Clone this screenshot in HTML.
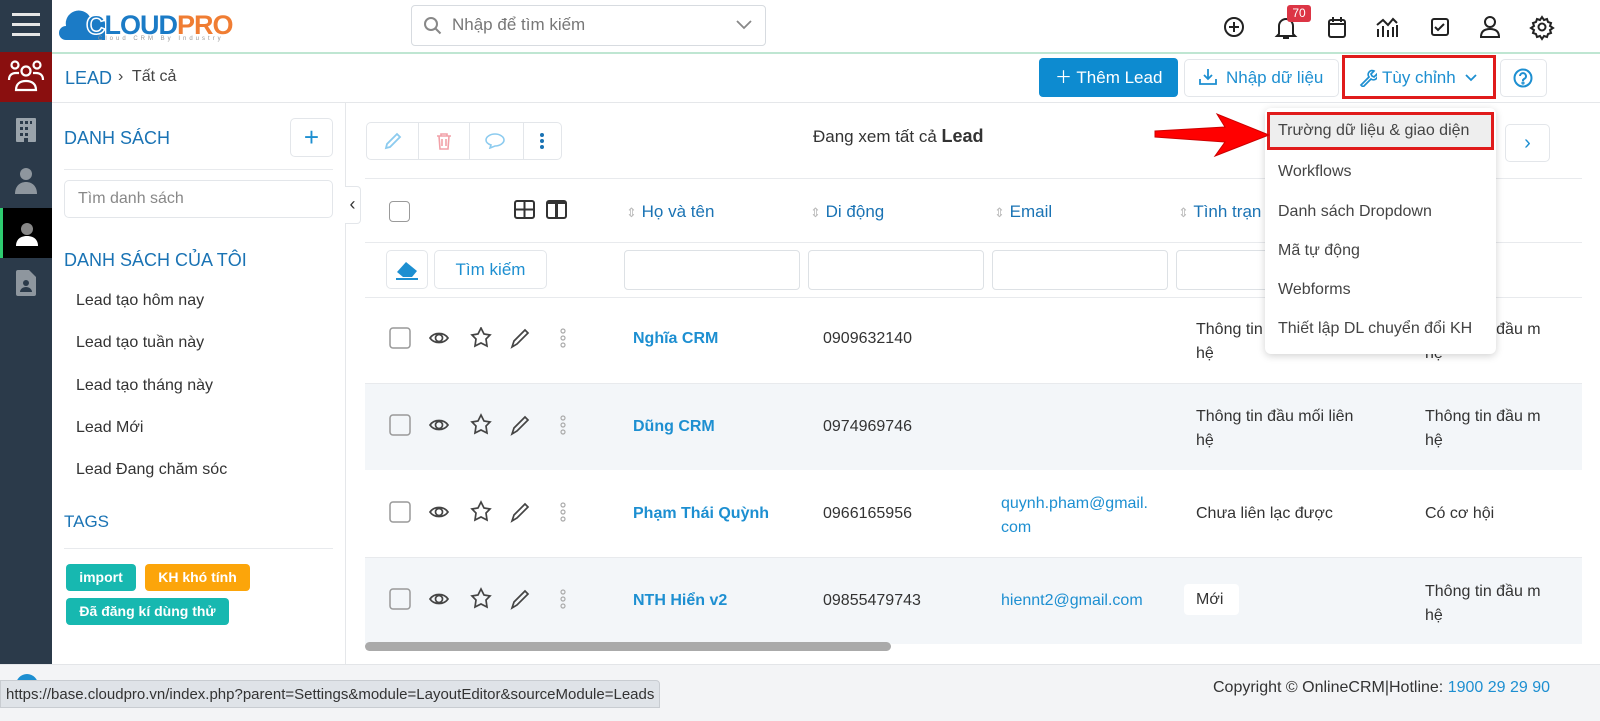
<!DOCTYPE html>
<html><head><meta charset="utf-8">
<style>
*{box-sizing:border-box;margin:0;padding:0}
body{width:1600px;height:721px;overflow:hidden;background:#fff;font-family:"Liberation Sans","Noto Sans CJK SC",sans-serif;font-size:16px;color:#333;position:relative}
.abs{position:absolute}
.blue{color:#1a73b4}
.lnk{color:#1d8fd1}
svg{display:block}
.btn{position:absolute;border:1px solid #e3e6ea;border-radius:5px;background:#fff}
.cb{position:absolute;width:21px;height:21px;border:1.5px solid #9a9a9a;border-radius:4px;background:#fff}
.inp{position:absolute;top:250px;height:40px;border:1px solid #dde1e5;border-radius:4px;background:#fff}
.row{position:absolute;left:365px;width:1217px}
.t{position:absolute;font-size:16px}
</style></head><body>
<!-- sidebar -->
<div class="abs" style="left:0;top:0;width:52px;height:721px;background:#2b3a4a"></div>
<div class="abs" style="left:12px;top:13px;width:28px;height:3px;background:#e6e6e6;box-shadow:0 10px 0 #e6e6e6,0 20px 0 #e6e6e6"></div>
<div class="abs" style="left:0;top:52px;width:52px;height:50px;background:#8a0f0f"></div>
<svg class="abs" style="left:7px;top:58px" width="38" height="36" viewBox="0 0 38 36" fill="none" stroke="#fff" stroke-width="2.2"><circle cx="8" cy="7" r="3.5"/><circle cx="30" cy="7" r="3.5"/><circle cx="19" cy="13" r="4.5"/><path d="M2 22c0-5 3-7 7-7h3M36 22c0-5-3-7-7-7h-3M9 32c0-6 4-9 10-9s10 3 10 9z"/></svg>
<svg class="abs" style="left:16px;top:118px" width="20" height="24"><rect x="0" y="0" width="20" height="24" rx="1" fill="#9aa3ab"/><g fill="#2b3a4a"><rect x="4" y="3" width="3" height="3"/><rect x="9" y="3" width="3" height="3"/><rect x="14" y="3" width="2" height="3"/><rect x="4" y="9" width="3" height="3"/><rect x="9" y="9" width="3" height="3"/><rect x="4" y="15" width="3" height="3"/><rect x="9" y="15" width="3" height="3"/><rect x="8" y="20" width="4" height="4"/></g></svg>
<svg class="abs" style="left:14px;top:166px" width="24" height="28"><circle cx="12" cy="8" r="6" fill="#8e969e"/><path d="M1 28c0-8 5-12 11-12s11 4 11 12z" fill="#8e969e"/></svg>
<div class="abs" style="left:0;top:208px;width:52px;height:50px;background:#000"></div>
<div class="abs" style="left:0;top:208px;width:3px;height:50px;background:#2ecc71"></div>
<svg class="abs" style="left:15px;top:221px" width="24" height="26"><circle cx="12" cy="8" r="6" fill="#888"/><path d="M1 25c0-7 5-10 11-10s11 3 11 10z" fill="#fff"/></svg>
<svg class="abs" style="left:16px;top:270px" width="20" height="26"><path d="M0 2a2 2 0 0 1 2-2h11l7 7v17a2 2 0 0 1-2 2H2a2 2 0 0 1-2-2z" fill="#8e969e"/><circle cx="10" cy="13" r="3" fill="#2b3a4a"/><path d="M4 22c0-3 3-5 6-5s6 2 6 5z" fill="#2b3a4a"/></svg>
<!-- top bar -->
<div class="abs" style="left:52px;top:52px;width:1548px;height:2px;background:#bfe6d2"></div>
<svg class="abs" style="left:59px;top:4px" width="50" height="38"><path d="M7 36a7 7 0 0 1 0-14 13 13 0 0 1 24-9 9 9 0 0 1 15 6v17z" fill="#1b7bc6"/></svg>
<div class="abs" style="left:86px;top:10px;font-size:27px;font-weight:bold;letter-spacing:-1px;line-height:30px"><span style="color:#1b7bc6;-webkit-text-stroke:1.5px #fff">C</span><span style="color:#1b7bc6">LOUD</span><span style="color:#f07d33">PRO</span></div>
<div class="abs" style="left:98px;top:36px;font-size:6px;color:#999;letter-spacing:3px">Cloud CRM By Industry</div>
<div class="abs" style="left:411px;top:5px;width:355px;height:41px;border:1px solid #d7dbe0;border-radius:4px"></div>
<svg class="abs" style="left:424px;top:17px" width="18" height="18" fill="none" stroke="#888" stroke-width="2"><circle cx="7" cy="7" r="6"/><path d="M11.5 11.5l5 5"/></svg>
<div class="t" style="left:452px;top:15px;color:#777;font-size:17px">Nhập để tìm kiếm</div>
<svg class="abs" style="left:736px;top:20px" width="16" height="10" fill="none" stroke="#888" stroke-width="1.8"><path d="M1 1l7 7 7-7"/></svg>
<svg class="abs" style="left:1222px;top:15px" width="350" height="26" fill="none" stroke="#222" stroke-width="2">
<circle cx="12" cy="12" r="9"/><path d="M12 7v10M7 12h10"/>
<path d="M57 19V11a7 7 0 0 1 14 0v8l2 2H55zM61 23h6" />
<rect x="107" y="5" width="16" height="17" rx="2"/><path d="M107 9h16M111 2v5M119 2v5"/>
<path d="M156 22v-8M161 22v-11M166 22v-7M171 22v-10M175 22v-12M155 10l6-5 5 5 5-6 4 4"/>
<rect x="210" y="4" width="16" height="16" rx="2"/><path d="M213 12l3 3 6-6"/>
<circle cx="268" cy="7" r="5"/><path d="M259 22c0-6 4-8 9-8s9 2 9 8z"/>
<circle cx="320" cy="12" r="3.5"/><path d="M320 2l2 3 3-1 1 3 3 1-1 3 3 2-3 2 1 3-3 1-1 3-3-1-2 3-2-3-3 1-1-3-3-1 1-3-3-2 3-2-1-3 3-1 1-3 3 1z"/>
</svg>
<div class="abs" style="left:1287px;top:5px;width:24px;height:17px;background:#dc3545;color:#fff;font-size:12px;border-radius:3px;text-align:center;line-height:17px">70</div>
<!-- breadcrumb -->
<div class="abs" style="left:52px;top:102px;width:1548px;height:1px;background:#e5e7ea"></div>
<div class="t blue" style="left:65px;top:68px;font-size:18px">LEAD</div>
<div class="t" style="left:118px;top:68px;font-size:16px;color:#444">›&nbsp; Tất cả</div>
<div class="abs" style="left:1039px;top:58px;width:139px;height:39px;background:#0d8bd0;border-radius:4px;color:#fff;font-size:17px;line-height:39px;padding-left:16px">＋ Thêm Lead</div>
<div class="btn" style="left:1184px;top:59px;width:155px;height:38px"></div>
<svg class="abs" style="left:1199px;top:68px" width="18" height="18" fill="none" stroke="#1d8fd1" stroke-width="1.8"><path d="M9 1v10M5 7l4 4 4-4M1 11v5h16v-5"/></svg>
<div class="t lnk" style="left:1226px;top:68px;font-size:17px">Nhập dữ liệu</div>
<div class="abs" style="left:1342px;top:55px;width:154px;height:44px;border:3px solid #e01b1b"></div>
<svg class="abs" style="left:1359px;top:69px" width="18" height="18" fill="none" stroke="#1d8fd1" stroke-width="1.7"><path d="M2 16l8-8a4 4 0 0 1 5-6l-3 3 1 2 2 1 3-3a4 4 0 0 1-6 5l-8 8z"/></svg>
<div class="t lnk" style="left:1382px;top:68px;font-size:17px">Tùy chỉnh</div>
<svg class="abs" style="left:1465px;top:74px" width="12" height="8" fill="none" stroke="#1d8fd1" stroke-width="1.8"><path d="M1 1l5 5 5-5"/></svg>
<div class="btn" style="left:1500px;top:59px;width:47px;height:38px"></div>
<svg class="abs" style="left:1513px;top:68px" width="20" height="20" fill="none" stroke="#1d8fd1" stroke-width="2"><circle cx="10" cy="10" r="8.5"/><path d="M7 8a3 3 0 1 1 4 3l-1 1v1"/><circle cx="10" cy="15" r=".6"/></svg>
<!-- left panel -->
<div class="abs" style="left:345px;top:103px;width:1px;height:561px;background:#e5e7ea"></div>
<div class="t blue" style="left:64px;top:128px;font-size:18px">DANH SÁCH</div>
<div class="btn" style="left:290px;top:118px;width:43px;height:39px;color:#1d8fd1;font-size:26px;text-align:center;line-height:36px">+</div>
<div class="abs" style="left:64px;top:169px;width:269px;height:1px;background:#e8eaed"></div>
<div class="btn" style="left:64px;top:180px;width:269px;height:38px"></div>
<div class="t" style="left:78px;top:190px;color:#888">Tìm danh sách</div>
<div class="t blue" style="left:64px;top:250px;font-size:18px">DANH SÁCH CỦA TÔI</div>
<div class="t" style="left:76px;top:292px">Lead tạo hôm nay</div>
<div class="t" style="left:76px;top:334px">Lead tạo tuần này</div>
<div class="t" style="left:76px;top:377px">Lead tạo tháng này</div>
<div class="t" style="left:76px;top:419px">Lead Mới</div>
<div class="t" style="left:76px;top:461px">Lead Đang chăm sóc</div>
<div class="t blue" style="left:64px;top:512px;font-size:17px">TAGS</div>
<div class="abs" style="left:64px;top:548px;width:269px;height:1px;background:#e8eaed"></div>
<div class="abs" style="left:66px;top:564px;width:70px;height:27px;background:#17b8b0;border-radius:4px;color:#fff;font-size:14px;font-weight:bold;text-align:center;line-height:27px">import</div>
<div class="abs" style="left:145px;top:564px;width:105px;height:27px;background:#fca50a;border-radius:4px;color:#fff;font-size:14px;font-weight:bold;text-align:center;line-height:27px">KH khó tính</div>
<div class="abs" style="left:66px;top:598px;width:163px;height:27px;background:#17b8b0;border-radius:4px;color:#fff;font-size:14px;font-weight:bold;text-align:center;line-height:27px">Đã đăng kí dùng thử</div>
<div class="btn" style="left:345px;top:186px;width:16px;height:38px;border-left:none;border-radius:0 4px 4px 0;font-size:18px;line-height:34px;text-align:center;color:#333">‹</div>
<!-- toolbar -->
<div class="btn" style="left:366px;top:122px;width:196px;height:38px"></div>
<div class="abs" style="left:418px;top:123px;width:1px;height:36px;background:#e3e6ea"></div>
<div class="abs" style="left:469px;top:123px;width:1px;height:36px;background:#e3e6ea"></div>
<div class="abs" style="left:523px;top:123px;width:1px;height:36px;background:#e3e6ea"></div>
<svg class="abs" style="left:384px;top:132px" width="18" height="18" fill="none" stroke="#8ccbef" stroke-width="1.8"><path d="M2 16l1-4 10-10 3 3-10 10z"/></svg>
<svg class="abs" style="left:436px;top:132px" width="16" height="18" fill="none" stroke="#f2a1a8" stroke-width="1.6"><path d="M1 4h14M5 4V2h6v2M3 4l1 13h8l1-13M6 7v7M10 7v7"/></svg>
<svg class="abs" style="left:485px;top:133px" width="20" height="16" fill="none" stroke="#8ccbef" stroke-width="1.6"><path d="M10 1c5 0 9 3 9 6s-4 6-9 6l-5 2 1-3c-3-1-5-3-5-5 0-3 4-6 9-6z"/></svg>
<div class="abs" style="left:540px;top:133px;width:4px;height:4px;border-radius:2px;background:#1a73b4;box-shadow:0 6px 0 #1a73b4,0 12px 0 #1a73b4"></div>
<div class="t" style="left:813px;top:126px;font-size:17px">Đang xem tất cả <b style="font-size:18px">Lead</b></div>
<div class="btn" style="left:1505px;top:124px;width:45px;height:38px;color:#1d8fd1;text-align:center;line-height:36px;font-size:20px">›</div>
<!-- table -->
<div class="abs" style="left:365px;top:178px;width:1217px;height:1px;background:#e8eaed"></div>
<div class="abs" style="left:365px;top:242px;width:1217px;height:1px;background:#e8eaed"></div>
<div class="abs" style="left:365px;top:297px;width:1217px;height:1px;background:#e8eaed"></div>
<div class="cb" style="left:389px;top:201px"></div>
<svg class="abs" style="left:514px;top:200px" width="54" height="20" fill="none" stroke="#333" stroke-width="2"><rect x="1" y="1" width="19" height="17" rx="2"/><path d="M10.5 1v17M1 9.5h19"/><rect x="33" y="1" width="19" height="17" rx="2"/><path d="M42.5 1v17M33 2.5h19" stroke-width="3"/></svg>
<div class="t blue" style="left:626px;top:202px;font-size:17px"><span style="color:#bbb;font-size:13px">⇕</span> Họ và tên</div>
<div class="t blue" style="left:810px;top:202px;font-size:17px"><span style="color:#bbb;font-size:13px">⇕</span> Di động</div>
<div class="t blue" style="left:994px;top:202px;font-size:17px"><span style="color:#bbb;font-size:13px">⇕</span> Email</div>
<div class="t blue" style="left:1178px;top:202px;font-size:17px"><span style="color:#bbb;font-size:13px">⇕</span> Tình trạn</div>
<div class="btn" style="left:386px;top:250px;width:42px;height:39px"></div>
<svg class="abs" style="left:395px;top:260px" width="24" height="20"><path d="M2 12l9-10 11 9-5 6H8z" fill="#1d8fd1"/><path d="M1 19h22" stroke="#1d8fd1" stroke-width="2"/></svg>
<div class="btn lnk" style="left:434px;top:250px;width:113px;height:39px;text-align:center;line-height:37px;font-size:17px">Tìm kiếm</div>
<div class="inp" style="left:624px;width:176px"></div>
<div class="inp" style="left:808px;width:176px"></div>
<div class="inp" style="left:992px;width:176px"></div>
<div class="inp" style="left:1176px;width:176px"></div>
<div class="row" style="top:383px;height:87px;background:#f3f6f9;border-top:1px solid #e8eaed"></div>
<div class="row" style="top:557px;height:87px;background:#f3f6f9;border-top:1px solid #e8eaed"></div>
<div class="abs" style="left:365px;top:642px;width:526px;height:9px;background:#aaa;border-radius:5px"></div>
<!-- row icons -->
<svg class="abs" style="left:389px;top:327px" width="190" height="290" fill="none" stroke="#444" stroke-width="1.7">
<g id="r"><rect x="1" y="1" width="20" height="20" rx="3" stroke="#999" stroke-width="1.5"/><path d="M41 11c4-6 14-6 18 0-4 6-14 6-18 0z"/><circle cx="50" cy="11" r="3.5"/><path d="M92 1l3 6 6 1-4 4 1 7-6-3-6 3 1-7-4-4 6-1z"/><path d="M123 20l2-6 11-11 3 3-11 11z"/><g stroke="#aaa" stroke-width="1.2"><circle cx="174" cy="4" r="2"/><circle cx="174" cy="11" r="2"/><circle cx="174" cy="18" r="2"/></g></g>
<use href="#r" y="87"/><use href="#r" y="174"/><use href="#r" y="261"/>
</svg>
<!-- row data -->
<div class="t lnk" style="left:633px;top:330px;font-weight:bold;color:#1d8fd1">Nghĩa CRM</div>
<div class="t" style="left:823px;top:330px">0909632140</div>
<div class="t" style="left:1196px;top:318px;line-height:24px">Thông tin đầu mối liên<br>hệ</div>
<div class="t" style="left:1425px;top:318px;line-height:24px">Thông tin đầu m<br>hệ</div>
<div class="t lnk" style="left:633px;top:418px;font-weight:bold">Dũng CRM</div>
<div class="t" style="left:823px;top:418px">0974969746</div>
<div class="t" style="left:1196px;top:405px;line-height:24px">Thông tin đầu mối liên<br>hệ</div>
<div class="t" style="left:1425px;top:405px;line-height:24px">Thông tin đầu m<br>hệ</div>
<div class="t lnk" style="left:633px;top:505px;font-weight:bold">Phạm Thái Quỳnh</div>
<div class="t" style="left:823px;top:505px">0966165956</div>
<div class="t lnk" style="left:1001px;top:492px;line-height:24px">quynh.pham@gmail.<br>com</div>
<div class="t" style="left:1196px;top:505px">Chưa liên lạc được</div>
<div class="t" style="left:1425px;top:505px">Có cơ hội</div>
<div class="t lnk" style="left:633px;top:592px;font-weight:bold">NTH Hiển v2</div>
<div class="t" style="left:823px;top:592px">09855479743</div>
<div class="t lnk" style="left:1001px;top:592px">hiennt2@gmail.com</div>
<div class="abs" style="left:1184px;top:584px;width:55px;height:31px;background:#fff;border-radius:4px;padding:8px 12px;font-size:16px;line-height:16px">Mới</div>
<div class="t" style="left:1425px;top:580px;line-height:24px">Thông tin đầu m<br>hệ</div>
<!-- dropdown -->
<div class="abs" style="left:1265px;top:108px;width:231px;height:246px;background:#fff;border-radius:6px;box-shadow:0 2px 8px rgba(0,0,0,.18)"></div>
<div class="abs" style="left:1267px;top:112px;width:227px;height:38px;background:#eee;border:3px solid #e01b1b"></div>
<div class="t" style="left:1278px;top:122px;color:#444">Trường dữ liệu &amp; giao diện</div>
<div class="t" style="left:1278px;top:163px;color:#444">Workflows</div>
<div class="t" style="left:1278px;top:203px;color:#444">Danh sách Dropdown</div>
<div class="t" style="left:1278px;top:242px;color:#444">Mã tự động</div>
<div class="t" style="left:1278px;top:281px;color:#444">Webforms</div>
<div class="t" style="left:1278px;top:320px;color:#444">Thiết lập DL chuyển đổi KH</div>
<!-- arrow -->
<svg class="abs" style="left:1150px;top:108px" width="120" height="50"><path d="M5 23l70-4-8-13 52 21-54 21 10-14-70-5z" fill="#f00" stroke="#c00" stroke-width="1"/></svg>
<!-- footer -->
<div class="abs" style="left:0;top:664px;width:1600px;height:57px;background:#f3f4f6;border-top:1px solid #e3e5e8"></div>
<div class="abs" style="left:16px;top:674px;width:22px;height:22px;border-radius:11px;background:#1d8fd1"></div>
<div class="abs" style="left:0;top:680px;width:660px;height:28px;background:#dfe3e8;border:1px solid #c8ccd1;border-radius:0 4px 0 0"></div>
<div class="t" style="left:6px;top:686px;font-size:15px;color:#333">https://base.cloudpro.vn/index.php?parent=Settings&amp;module=LayoutEditor&amp;sourceModule=Leads</div>
<div class="t" style="left:1213px;top:679px;font-size:16px;color:#333">Copyright © OnlineCRM|Hotline: <span class="lnk">1900 29 29 90</span></div>
</body></html>
